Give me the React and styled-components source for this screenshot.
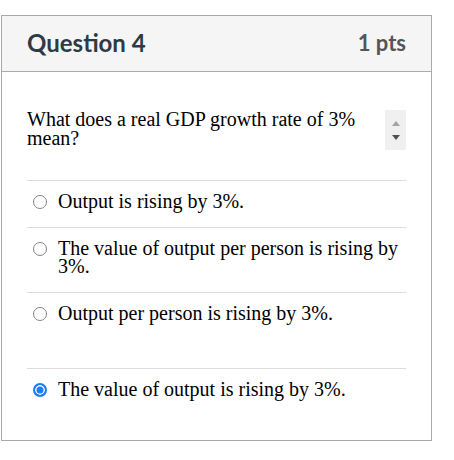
import React from 'react';
import styled, { createGlobalStyle } from 'styled-components';

const GlobalStyle = createGlobalStyle`
  body {
    margin: 0;
    background: #ffffff;
    font-family: "Liberation Serif", "Times New Roman", serif;
  }
`;

const QuizCard = styled.div`
  box-sizing: border-box;
  width: 431px;
  margin: 15px 0 0 1px;
  border: 1px solid #aaaaaa;
  background: #ffffff;
`;

const CardHeader = styled.div`
  box-sizing: border-box;
  height: 56px;
  display: flex;
  align-items: center;
  justify-content: space-between;
  padding: 0 25px 1px 25px;
  background: #f5f5f5;
  border-bottom: 1px solid #aaaaaa;
  font-family: Lato, "Open Sans", sans-serif;
`;

const QuestionTitle = styled.h2`
  margin: 0;
  font-size: 24px;
  font-weight: 700;
  line-height: 24px;
  color: #2d3b45;
`;

const Points = styled.span`
  font-size: 22px;
  font-weight: 700;
  line-height: 24px;
  color: #555555;
`;

const CardBody = styled.div`
  padding: 38px 25px 25px 25px;
`;

const QuestionRow = styled.div`
  display: flex;
  align-items: flex-start;
  gap: 14px;
  margin-bottom: 30px;
`;

const QuestionText = styled.p`
  flex: 1;
  margin: 0;
  font-size: 20px;
  line-height: 19px;
  color: #000000;
`;

const Spinner = styled.div`
  width: 21px;
  height: 40px;
  flex-shrink: 0;
  display: flex;
  flex-direction: column;
  align-items: center;
  justify-content: center;
  gap: 9px;
  background: #f0f0f0;
`;

const Arrow = styled.span`
  width: 0;
  height: 0;
  border-left: 4px solid transparent;
  border-right: 4px solid transparent;
  ${({ $up }) =>
    $up
      ? 'border-bottom: 5px solid #a3a3a3;'
      : 'border-top: 5px solid #505050;'}
`;

const AnswerList = styled.div`
  display: flex;
  flex-direction: column;
`;

const Answer = styled.label`
  display: flex;
  align-items: flex-start;
  padding: 11px 0 ${({ $extra }) => ($extra ? 46 : 17)}px 0;
  border-top: 1px solid #dddddd;
  font-size: 20px;
  line-height: 18px;
  color: #000000;
`;

const Radio = styled.input`
  appearance: none;
  box-sizing: border-box;
  width: 14px;
  height: 14px;
  flex-shrink: 0;
  margin: 3px 11px 0 6px;
  border: 1px solid #858585;
  border-radius: 50%;
  background: #ffffff;

  &:checked {
    border: 2px solid #1a7cff;
    background: #1a7cff;
    box-shadow: inset 0 0 0 1.5px #ffffff;
  }
`;

const answers = [
  { text: 'Output is rising by 3%.' },
  { text: 'The value of output per person is rising by 3%.' },
  { text: 'Output per person is rising by 3%.', extra: true },
  { text: 'The value of output is rising by 3%.', checked: true },
];

export default function App() {
  return (
    <>
      <GlobalStyle />
      <QuizCard>
        <CardHeader>
          <QuestionTitle>Question 4</QuestionTitle>
          <Points>1 pts</Points>
        </CardHeader>
        <CardBody>
          <QuestionRow>
            <QuestionText>What does a real GDP growth rate of 3% mean?</QuestionText>
            <Spinner>
              <Arrow $up />
              <Arrow />
            </Spinner>
          </QuestionRow>
          <AnswerList>
            {answers.map((a) => (
              <Answer key={a.text} $extra={a.extra}>
                <Radio type="radio" name="q4" defaultChecked={!!a.checked} />
                <span>{a.text}</span>
              </Answer>
            ))}
          </AnswerList>
        </CardBody>
      </QuizCard>
    </>
  );
}
